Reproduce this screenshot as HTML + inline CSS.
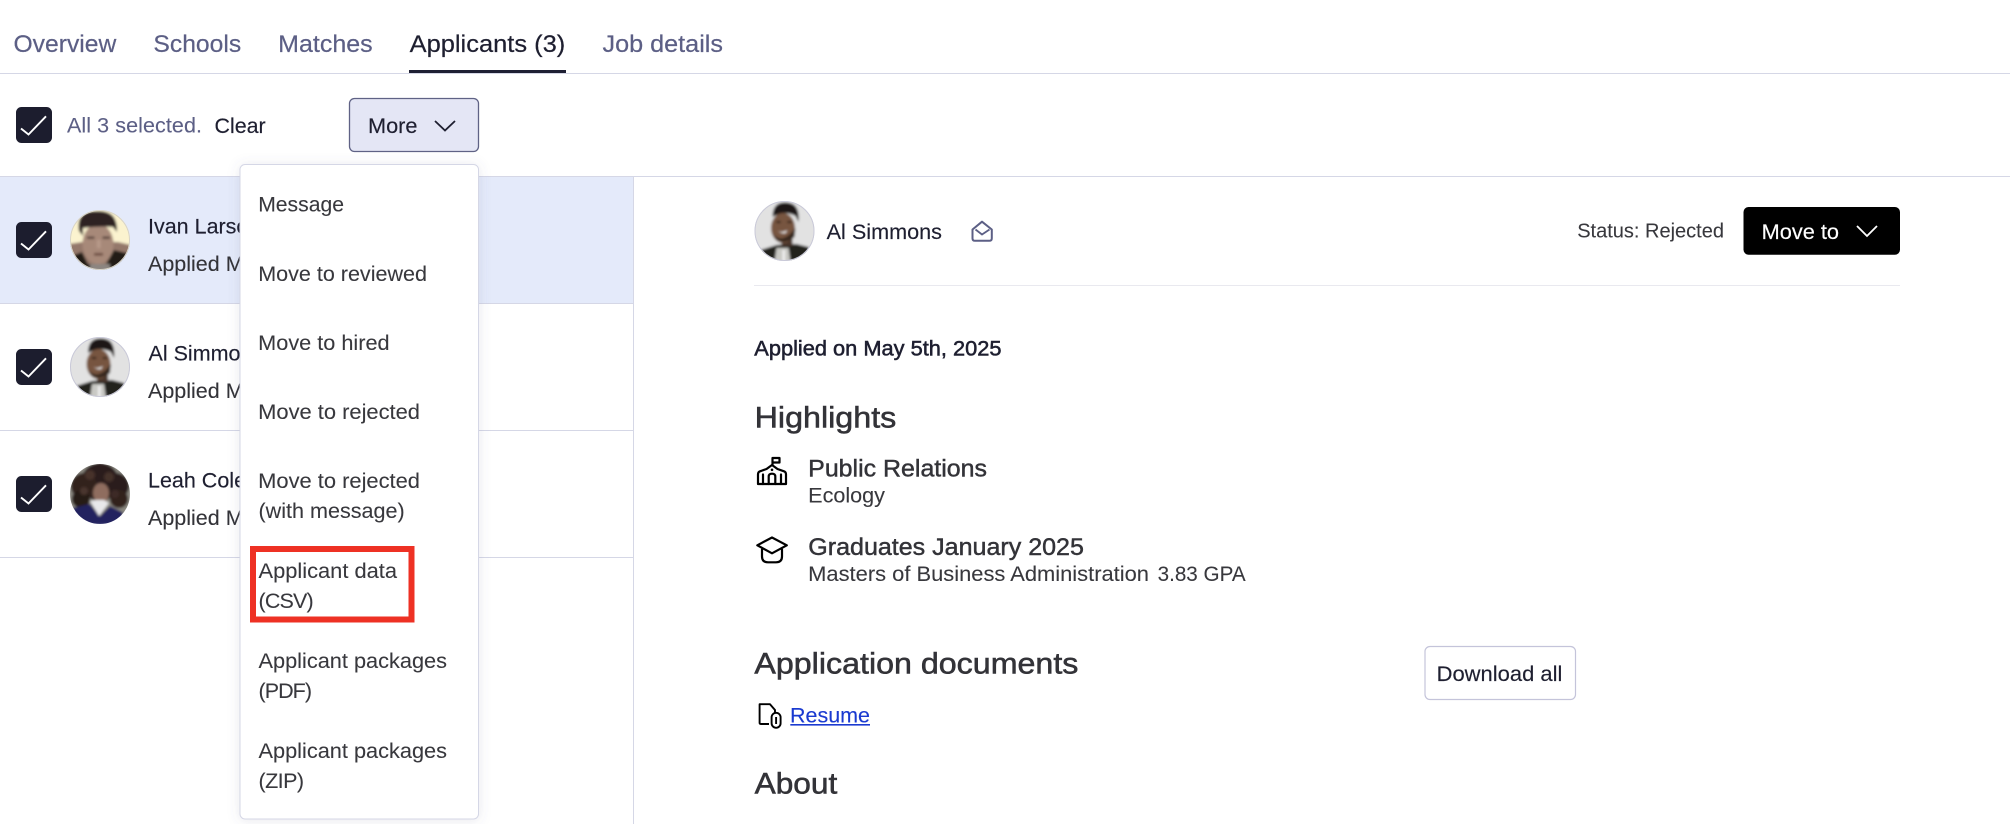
<!DOCTYPE html>
<html lang="en">
<head>
<meta charset="utf-8">
<title>Applicants</title>
<style>
html,body{margin:0;padding:0;background:#fff;width:2010px;height:824px;overflow:hidden}
svg{display:block}
text{font-family:"Liberation Sans",sans-serif;white-space:pre}
.tab{font-size:24.5px;fill:#5c5f85;stroke:#5c5f85;stroke-width:.2px}
.b{font-size:21.5px;fill:#1e1f30;stroke:#1e1f30;stroke-width:.15px}
.g{font-size:21.5px;fill:#333338;stroke:#333338;stroke-width:.1px}
.m{font-size:21.5px;fill:#38383d;stroke:#38383d;stroke-width:.08px}
.h{font-size:30px;fill:#333338;stroke:#333338;stroke-width:.55px}
.h2{font-size:24px;fill:#333338;stroke:#333338;stroke-width:.45px}
.s{font-size:21px;fill:#38383d;stroke:#38383d;stroke-width:.08px}
</style>
</head>
<body>
<svg xmlns="http://www.w3.org/2000/svg" width="2010" height="824" viewBox="0 0 2010 824">
<defs>
<filter id="bl" x="-10%" y="-10%" width="120%" height="120%"><feGaussianBlur stdDeviation="1.2"/></filter>
<filter id="sh" x="-20%" y="-10%" width="140%" height="120%"><feDropShadow dx="0" dy="1" stdDeviation="6" flood-color="#5c5f85" flood-opacity=".14"/></filter>
<clipPath id="cc"><circle cx="0" cy="0" r="30"/></clipPath>
<g id="cb">
<rect x="0" y="0" width="36" height="36" rx="5.5" fill="#1c1d2e"/>
<path d="M5 21.5 L12.5 27.5 L30 9.3" fill="none" stroke="#fff" stroke-width="1.9"/>
</g>
<g id="av1"><g clip-path="url(#cc)"><g filter="url(#bl)">
<rect x="-31" y="-31" width="62" height="62" fill="#fbf3cf"/>
<path d="M-31 4 L-18 2 L18 2 L31 5 V31 H-31Z" fill="#94786a"/>
<path d="M-31 17 L-18 12 L-12 24 L6 24 L14 10 L31 14 V31 H-31Z" fill="#241f19"/>
<rect x="-10" y="24" width="20" height="8" fill="#8c8580"/>
<ellipse cx="-2" cy="4" rx="15.5" ry="20" fill="#a78979"/>
<path d="M-21 -9 Q-24 -30 -3 -29 Q18 -30 17 -8 L13 -13 Q0 -14 -17 -12 L-17 -4 Z" fill="#2e2420"/>
<rect x="-13" y="-3.5" width="7.5" height="2.4" fill="#57423a"/>
<rect x="2.5" y="-3.5" width="7.5" height="2.4" fill="#57423a"/>
<rect x="-6" y="13" width="9" height="2.6" fill="#6b483e"/>
<rect x="-3" y="0" width="3.5" height="8" fill="#b89a8a"/>
</g></g><circle r="29.5" fill="none" stroke="#d8d4c8" stroke-width="1"/></g>
<g id="av2"><g clip-path="url(#cc)"><g filter="url(#bl)">
<rect x="-31" y="-31" width="62" height="62" fill="#e2e2e2"/>
<path d="M-31 31 L-24 19 L-8 14 L4 13 L12 13 L24 16 L31 31Z" fill="#24211f"/>
<path d="M-8 17 L4 17 L6 31 H-10Z" fill="#c9c9c4"/>
<rect x="-2" y="19" width="2.5" height="12" fill="#f2f2f2"/>
<rect x="-3" y="6" width="11" height="9" fill="#4a342a"/>
<path d="M-12 -14 Q-12 -30 3 -28.5 Q16 -27 14 -9 L11 -15 Q0 -21 -12 -14Z" fill="#1b1612"/>
<ellipse cx="-1.5" cy="-3" rx="12" ry="15" fill="#77553f"/>
<path d="M-12 2 Q-3 15 11 -3 L10 6 Q0 14 -8 9Z" fill="#35261f"/>
<path d="M-8 -1 Q-3 3 3 -1 L1 2 Q-3 3 -8 -1Z" fill="#f5f5f5"/>
<ellipse cx="-6" cy="-9" rx="2.5" ry="1" fill="#2a1a14"/>
<ellipse cx="5" cy="-9" rx="2.5" ry="1" fill="#2a1a14"/>
</g></g><circle r="29.5" fill="none" stroke="#c9c9d8" stroke-width="1"/></g>
<g id="av3"><g clip-path="url(#cc)"><g filter="url(#bl)">
<rect x="-31" y="-31" width="62" height="62" fill="#8a8880"/>
<circle cx="0" cy="-12" r="19" fill="#2a1d1c"/>
<circle cx="-16" cy="-8" r="13" fill="#33231f"/>
<circle cx="16" cy="-8" r="13" fill="#2a1d1c"/>
<circle cx="-19" cy="5" r="9" fill="#261a18"/>
<circle cx="19" cy="5" r="9" fill="#30221f"/>
<circle cx="-10" cy="-19" r="5" fill="#46322b"/>
<circle cx="9" cy="-17" r="5" fill="#443129"/>
<circle cx="-16" cy="-3" r="4" fill="#4a352d"/>
<circle cx="15" cy="0" r="4" fill="#3e2c26"/>
<ellipse cx="1" cy="-1" rx="8" ry="10" fill="#8f6d5e"/>
<path d="M-31 31 V15 L-10 10 L0 22 L10 12 L22 18 L28 31Z" fill="#24235f"/>
<path d="M-10 7 L-1 22 L9 9 L4 6 L-4 6Z" fill="#e8e8ea"/>
</g></g></g>
</defs>

<rect width="2010" height="824" fill="#fff"/>

<!-- tabs -->
<text class="tab" x="13.5" y="52" textLength="102.8" lengthAdjust="spacingAndGlyphs">Overview</text>
<text class="tab" x="153.4" y="52" textLength="87.8" lengthAdjust="spacingAndGlyphs">Schools</text>
<text class="tab" x="278.2" y="52" textLength="94.5" lengthAdjust="spacingAndGlyphs">Matches</text>
<text class="tab" x="409.6" y="52" textLength="155.7" lengthAdjust="spacingAndGlyphs" style="fill:#1e1f30;stroke:#1e1f30">Applicants (3)</text>
<text class="tab" x="602.5" y="52" textLength="120.5" lengthAdjust="spacingAndGlyphs">Job details</text>
<rect x="0" y="73" width="2010" height="1" fill="#d5d7e6"/>
<rect x="409" y="70" width="157" height="3" fill="#1e1f33"/>

<!-- toolbar -->
<use href="#cb" x="16" y="107"/>
<text x="67" y="132.5" textLength="135" lengthAdjust="spacing" style="font-size:21.5px;fill:#5c5f85;stroke:#5c5f85;stroke-width:.1px">All 3 selected.</text>
<text class="b" x="214.5" y="133" textLength="51.2" lengthAdjust="spacingAndGlyphs">Clear</text>
<rect x="349.5" y="98.5" width="129" height="53" rx="5" fill="#e4e6f5" stroke="#5f6285" stroke-width="1.3"/>
<text class="b" x="368" y="133" textLength="49.5" lengthAdjust="spacingAndGlyphs">More</text>
<path d="M435 121 L445 130.5 L455 121" fill="none" stroke="#1e1f30" stroke-width="1.8"/>
<rect x="0" y="176" width="2010" height="1" fill="#d5d7e6"/>

<!-- list -->
<rect x="0" y="177" width="633" height="126" fill="#e4eafa"/>
<rect x="0" y="303" width="633" height="1" fill="#d5d7e6"/>
<rect x="0" y="430" width="633" height="1" fill="#d5d7e6"/>
<rect x="0" y="557" width="633" height="1" fill="#d5d7e6"/>
<rect x="633" y="177" width="1" height="647" fill="#d5d7e6"/>

<use href="#cb" x="16" y="222"/>
<use href="#cb" x="16" y="349"/>
<use href="#cb" x="16" y="476"/>
<use href="#av1" x="100" y="240"/>
<use href="#av2" x="100" y="367"/>
<use href="#av3" x="100" y="494"/>

<text class="b" x="148" y="233.5">Ivan Larson</text>
<text class="g" x="148" y="271">Applied May 5th, 2025</text>
<text class="b" x="148.5" y="360.5">Al Simmons</text>
<text class="g" x="148" y="398">Applied May 5th, 2025</text>
<text class="b" x="148" y="487.5">Leah Coleman</text>
<text class="g" x="148" y="525">Applied May 5th, 2025</text>

<!-- dropdown -->
<rect x="240" y="164.5" width="238.5" height="654.5" rx="5" fill="#fff" stroke="#d5d7e6" stroke-width="1" filter="url(#sh)"/>
<text class="m" x="258.2" y="211.7" textLength="85.8" lengthAdjust="spacingAndGlyphs">Message</text>
<text class="m" x="258.2" y="281" textLength="168.8" lengthAdjust="spacingAndGlyphs">Move to reviewed</text>
<text class="m" x="258.2" y="350" textLength="131.4" lengthAdjust="spacingAndGlyphs">Move to hired</text>
<text class="m" x="258.2" y="419" textLength="161.8" lengthAdjust="spacingAndGlyphs">Move to rejected</text>
<text class="m" x="258.2" y="488" textLength="161.8" lengthAdjust="spacingAndGlyphs">Move to rejected</text>
<text class="m" x="258.5" y="518" textLength="146.2" lengthAdjust="spacingAndGlyphs">(with message)</text>
<text class="m" x="258.5" y="578" textLength="138.5" lengthAdjust="spacingAndGlyphs">Applicant data</text>
<text class="m" x="258.5" y="608" textLength="55.2" lengthAdjust="spacing">(CSV)</text>
<text class="m" x="258.5" y="668" textLength="188.5" lengthAdjust="spacingAndGlyphs">Applicant packages</text>
<text class="m" x="258.5" y="698" textLength="53.5" lengthAdjust="spacing">(PDF)</text>
<text class="m" x="258.5" y="758" textLength="188.5" lengthAdjust="spacingAndGlyphs">Applicant packages</text>
<text class="m" x="258.5" y="788" textLength="45.5" lengthAdjust="spacing">(ZIP)</text>
<rect x="253" y="549" width="158.5" height="70.5" fill="none" stroke="#ee3124" stroke-width="6"/>

<!-- detail header -->
<use href="#av2" x="784.5" y="231"/>
<text class="b" x="826.6" y="239" textLength="115.4" lengthAdjust="spacingAndGlyphs">Al Simmons</text>
<path d="M972.5 229.5 L982 221.7 L991.8 229.5 V238.2 Q991.8 240.8 989.2 240.8 H975 Q972.5 240.8 972.5 238.2 Z" fill="none" stroke="#5c5f85" stroke-width="2" stroke-linejoin="round"/>
<path d="M975.5 229.5 L982 234.5 L989.5 229.5" fill="none" stroke="#5c5f85" stroke-width="1.8"/>
<text x="1577.2" y="237.5" textLength="146.8" lengthAdjust="spacingAndGlyphs" style="font-size:20.5px;fill:#38383d;stroke:#38383d;stroke-width:.08px">Status: Rejected</text>
<rect x="1743.5" y="207" width="156.5" height="47.7" rx="5" fill="#000"/>
<text x="1761.6" y="239" textLength="77.4" lengthAdjust="spacingAndGlyphs" style="font-size:21.5px;fill:#fff;stroke:#fff;stroke-width:.15px">Move to</text>
<path d="M1857 226 L1867 236 L1877 226" fill="none" stroke="#fff" stroke-width="1.8"/>
<rect x="754" y="285" width="1146" height="1" fill="#e9e9ef"/>

<!-- detail body -->
<text x="754.3" y="355.7" textLength="247.2" lengthAdjust="spacingAndGlyphs" style="font-size:21.5px;fill:#1e1f30;stroke:#1e1f30;stroke-width:.55px">Applied on May 5th, 2025</text>
<text class="h" x="754.6" y="427.3" textLength="141.7" lengthAdjust="spacingAndGlyphs">Highlights</text>

<g fill="none" stroke="#000" stroke-width="2.2" stroke-linejoin="round" stroke-linecap="round">
<path d="M758 484 V474.5 Q758 472 760 471.3 L766.5 469 L772 465 L777.5 469 L784 471.3 Q786 472 786 474.5 V484 Z"/>
<path d="M772.5 465 V458 H779.5 V462.5 H772.5"/>
<path d="M763 474.5 V484 M781 474.5 V484"/>
<path d="M768.7 484 V476.5 Q768.7 473.7 772 473.7 Q775.3 473.7 775.3 476.5 V484"/>
</g>
<circle cx="772" cy="469.8" r="1.3" fill="#000"/>
<text class="h2" x="808.2" y="476.7" textLength="178.8" lengthAdjust="spacingAndGlyphs">Public Relations</text>
<text class="s" x="808.2" y="502.7" textLength="76.8" lengthAdjust="spacingAndGlyphs">Ecology</text>

<g fill="none" stroke="#000" stroke-width="2.2" stroke-linejoin="round" stroke-linecap="round">
<path d="M772 537.5 L786.8 545.3 L772 553.3 L757.3 545.3 Z"/>
<path d="M762 549.5 V556.5 Q762 562.3 768 562.3 H776 Q782 562.3 782 556.5 V549.5"/>
</g>
<text class="h2" x="808.3" y="555" textLength="275.6" lengthAdjust="spacingAndGlyphs">Graduates January 2025</text>
<text class="s" x="808.2" y="581" textLength="340.8" lengthAdjust="spacingAndGlyphs">Masters of Business Administration</text>
<text class="s" x="1157.6" y="581" textLength="88" lengthAdjust="spacingAndGlyphs">3.83 GPA</text>

<text class="h" x="754.4" y="673.3" textLength="324" lengthAdjust="spacingAndGlyphs">Application documents</text>
<rect x="1425" y="646.5" width="150.5" height="53" rx="5" fill="#fff" stroke="#c4c4da" stroke-width="1.2"/>
<text class="b" x="1436.6" y="681" textLength="125.8" lengthAdjust="spacingAndGlyphs">Download all</text>

<g fill="none" stroke="#000" stroke-width="1.9" stroke-linejoin="round">
<path d="M769 724 H760.8 Q759.6 724 759.6 722.8 V704.2 H770 L775 710 V712.5"/>
<rect x="771.6" y="712.8" width="9" height="15" rx="4.5"/>
<path d="M776.1 717 V724"/>
</g>
<text x="790" y="722.3" textLength="80" lengthAdjust="spacingAndGlyphs" style="font-size:21.5px;fill:#1a3ad0;stroke:#1a3ad0;stroke-width:.12px">Resume</text>
<rect x="790.3" y="724" width="79.7" height="1.6" fill="#1a3ad0"/>

<text class="h" x="754.6" y="793.3" textLength="82.7" lengthAdjust="spacingAndGlyphs">About</text>
</svg>
</body>
</html>
